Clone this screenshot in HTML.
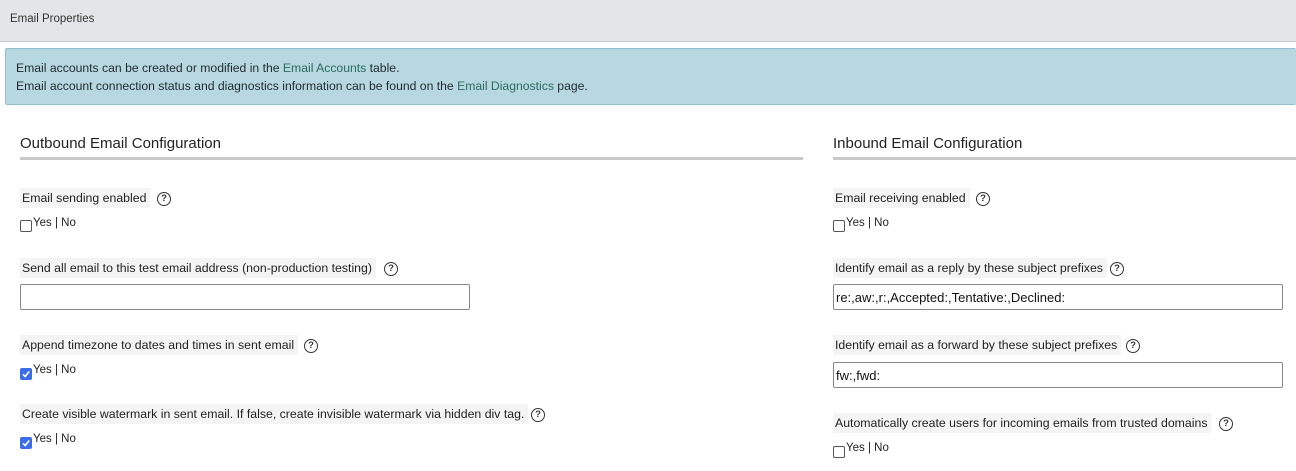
<!DOCTYPE html>
<html><head><style>
body{margin:0;width:1296px;height:471px;overflow:hidden;background:#fff;font-family:"Liberation Sans",sans-serif;color:#222;position:relative}
.a{position:absolute}
.hdr{left:0;top:0;width:1296px;height:42px;background:#e4e5e9;border-bottom:1px solid #c9cacd;box-sizing:border-box}
.hdr span{position:absolute;left:10px;top:13px;font-size:11.5px;color:#333}
.info{left:5px;top:48px;width:1291px;height:57px;background:#b8d8e1;border:1px solid #93c0cd;border-right:none;border-radius:2px;box-sizing:border-box;font-size:12.2px;line-height:18px;padding:10px 0 0 10px;color:#1f2a2e}
.info b{font-weight:normal;color:#2b6c5c}
.h{font-size:15px;color:#222}
.line{height:3px;background:#c8c8c8}
.lbl{font-size:12.3px;background:#f4f4f4;padding:3px 4px 3px 2px;color:#222}
.q{width:12px;height:12px;border:1.3px solid #333;border-radius:50%;font-size:9.5px;line-height:12px;text-align:center;font-weight:bold;color:#333}
.yn{font-size:11.5px;color:#222}
.cb{width:12px;height:12px;border:1px solid #555;border-radius:2px;box-sizing:border-box;background:#fff}
.cb.on{background:#3c6de8;border-color:#3c6de8}
.cb svg{position:absolute;left:-1px;top:-1px}
.inp{height:26px;border:1px solid #888;box-sizing:border-box;border-radius:2px;font-size:13px;padding:5px 0 0 2px;color:#111}
</style></head><body>
<div class="a hdr"><span>Email Properties</span></div>
<div class="a info">Email accounts can be created or modified in the <b>Email Accounts</b> table.<br>Email account connection status and diagnostics information can be found on the <b>Email Diagnostics</b> page.</div>

<div class="a h" style="left:20px;top:135px">Outbound Email Configuration</div>
<div class="a line" style="left:20px;top:157px;width:783px"></div>
<div class="a h" style="left:833px;top:135px">Inbound Email Configuration</div>
<div class="a line" style="left:833px;top:157px;width:463px"></div>

<div class="a lbl" style="left:20px;top:188px">Email sending enabled</div>
<div class="a q" style="left:157px;top:192px">?</div>
<div class="a cb" style="left:20px;top:220px"></div><div class="a yn" style="left:33px;top:217px">Yes | No</div>

<div class="a lbl" style="left:20px;top:258px">Send all email to this test email address (non-production testing)</div>
<div class="a q" style="left:384px;top:262px">?</div>
<div class="a inp" style="left:20px;top:284px;width:450px"></div>

<div class="a lbl" style="left:20px;top:335px">Append timezone to dates and times in sent email</div>
<div class="a q" style="left:304px;top:339px">?</div>
<div class="a cb on" style="left:20px;top:368px"><svg width="12" height="12" viewBox="0 0 12 12"><path d="M3 6.3l2.2 2.2 4-5" stroke="#fff" stroke-width="1.6" fill="none"/></svg></div><div class="a yn" style="left:33px;top:364px">Yes | No</div>

<div class="a lbl" style="left:20px;top:404px">Create visible watermark in sent email. If false, create invisible watermark via hidden div tag.</div>
<div class="a q" style="left:531px;top:408px">?</div>
<div class="a cb on" style="left:20px;top:437px"><svg width="12" height="12" viewBox="0 0 12 12"><path d="M3 6.3l2.2 2.2 4-5" stroke="#fff" stroke-width="1.6" fill="none"/></svg></div><div class="a yn" style="left:33px;top:433px">Yes | No</div>

<div class="a lbl" style="left:833px;top:188px">Email receiving enabled</div>
<div class="a q" style="left:976px;top:192px">?</div>
<div class="a cb" style="left:833px;top:220px"></div><div class="a yn" style="left:846px;top:217px">Yes | No</div>

<div class="a lbl" style="left:833px;top:258px">Identify email as a reply by these subject prefixes</div>
<div class="a q" style="left:1110px;top:262px">?</div>
<div class="a inp" style="left:833px;top:284px;width:450px">re:,aw:,r:,Accepted:,Tentative:,Declined:</div>

<div class="a lbl" style="left:833px;top:335px">Identify email as a forward by these subject prefixes</div>
<div class="a q" style="left:1126px;top:339px">?</div>
<div class="a inp" style="left:833px;top:362px;width:450px">fw:,fwd:</div>

<div class="a lbl" style="left:833px;top:413px">Automatically create users for incoming emails from trusted domains</div>
<div class="a q" style="left:1219px;top:417px">?</div>
<div class="a cb" style="left:833px;top:446px"></div><div class="a yn" style="left:846px;top:442px">Yes | No</div>
</body></html>
